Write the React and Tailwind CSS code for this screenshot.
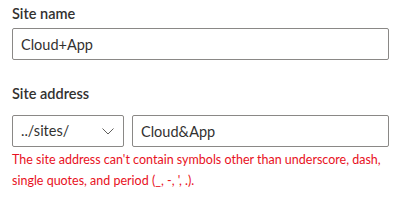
import { useState } from "react";

function Chevron() {
  return (
    <svg width="12" height="7" viewBox="0 0 12 7" fill="none" className="shrink-0">
      <path d="M0.5 0.5 L6 6 L11.5 0.5" stroke="#605e5c" strokeWidth="1" />
    </svg>
  );
}

export default function App() {
  const [name, setName] = useState("Cloud+App");
  const [address, setAddress] = useState("Cloud&App");

  return (
    <div className="w-[405px] h-[203px] bg-white pl-3 pr-4 text-[#323130] font-['Lato',sans-serif]">
      <label className="block pt-[4px] pb-[4px] text-[14.5px] font-semibold leading-5">Site name</label>
      <input
        value={name}
        onChange={(e) => setName(e.target.value)}
        className="block w-[377px] h-8 px-2 border border-[#8a8886] rounded-[2px] text-[14.5px] outline-none"
      />

      <label className="block mt-[21px] pt-[3px] pb-[5px] text-[14.5px] font-semibold leading-5">Site address</label>
      <div className="flex gap-2 mt-[6px]">
        <div className="flex items-center justify-between w-[112px] h-8 pl-2 pr-[9px] border border-[#8a8886] rounded-[2px] text-[14.5px]">
          <span>../sites/</span>
          <Chevron />
        </div>
        <input
          value={address}
          onChange={(e) => setAddress(e.target.value)}
          className="block w-[257px] h-8 px-2 border border-[#8a8886] rounded-[2px] text-[14.5px] outline-none"
        />
      </div>
      <p className="pt-[2px] text-[12.5px] leading-[21px] text-[#e81123]">
        The site address can't contain symbols other than underscore, dash, single quotes, and period (_, -, ', .).
      </p>
    </div>
  );
}
